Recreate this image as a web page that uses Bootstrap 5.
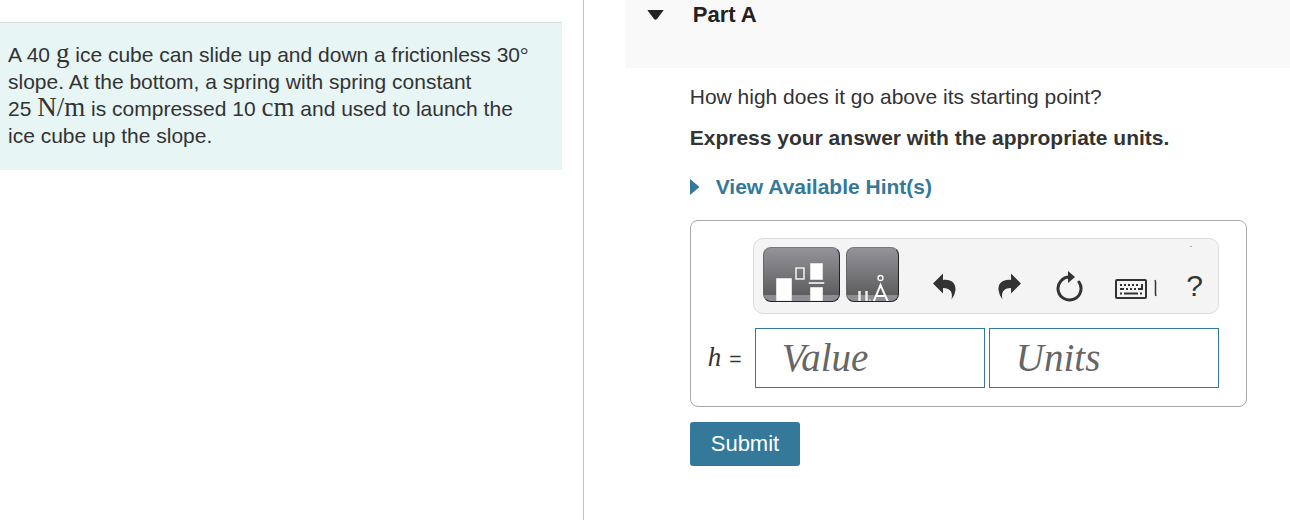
<!DOCTYPE html>
<html lang="en">
<head>
<meta charset="utf-8">
<meta name="viewport" content="width=device-width, initial-scale=1">
<title>Part A</title>
<link href="https://cdn.jsdelivr.net/npm/bootstrap@5.3.0/dist/css/bootstrap.min.css" rel="stylesheet">
<style>
  body { font-family: "Liberation Sans", Arial, sans-serif; font-size: 21px; line-height: 27px; color: #333; }
  .problem-pane { flex: 0 0 45.25%; border-right: 1px solid #bcc5cc; padding: 22px 21px 0 0; }
  .problem-text { background: #e7f5f5; border-top: 1px solid #d9dcdc; padding: 18px 24px 21px 8px; }
  .unit { font-family: "Liberation Serif", "Times New Roman", serif; font-size: 27px; line-height: 20px; }
  .degree { font-family: "Liberation Serif", "Times New Roman", serif; line-height: 20px; }
  .part-pane { min-width: 0; padding-left: 41px; }
  .part-head { background: #f9f9f9; height: 68px; padding: 1px 22px; }
  .part-toggle { font-size: 22px; line-height: 27px; color: #222; gap: 29px; }
  .part-body { padding: 15px 43px 24px 65px; }
  .instruction { margin: 14px 0 22px; }
  .hint-link { color: #34799a; gap: 16px; }
  .answer-box { border: 1px solid #aaa; border-radius: 8px; padding: 17px 27px 18px 17px; margin-top: 19px; }
  .answer-grid { display: grid; grid-template-columns: 45px 1fr; row-gap: 14px; align-items: center; }
  .tools { grid-column: 2; background: #f4f4f4; border: 1px solid #dcdcdc; border-radius: 10px; height: 76px; padding: 8px 9px; gap: 6px; }
  .tool-tile { height: 55px; border: 1px solid #222; border-top-color: #777; border-left-color: #666; border-radius: 8px; overflow: hidden;
    background: linear-gradient(#94939b, #5e5e5e 88%, #8e8d96 89%, #8e8d96); }
  .tile-wide { width: 77px; }
  .tile-narrow { width: 53px; }
  .tool-icons { padding: 0 6px 0 28px; }
  .tool-btn { color: #333; line-height: 30px; margin-top: 20px; }
  .tool-low { margin-top: 26px; margin-right: -4px; }
  .help-btn { position: relative; font-size: 30px; }
  .help-btn::after { content: ""; position: absolute; top: -25px; left: 4px; width: 2px; height: 1px; background: #aaa; }
  .variable { font-family: "Liberation Serif", "Times New Roman", serif; font-size: 27px; }
  .answer-fields { margin-left: 2px; }
  .answer-input { min-width: 0; height: 60px; border: 1px solid #34799a; border-radius: 0; padding: 0 26px; background: #fff;
    font: italic 39px/56px "Liberation Serif", "Times New Roman", serif; color: #333; }
  .answer-input::placeholder { color: #666; opacity: 1; }
  .submit-btn { background: #34799a; color: #fff; border: 0; border-radius: 3px; font-size: 22px; line-height: 28px; padding: 8px 21px; margin-top: 15px; }
</style>
<script src="https://cdn.jsdelivr.net/npm/bootstrap@5.3.0/dist/js/bootstrap.bundle.min.js"></script>
</head>
<body>
<div class="d-flex min-vh-100">
  <aside class="problem-pane">
    <p class="problem-text mb-0">A 40 <span class="unit">g</span> ice cube can slide up and down a frictionless 30<span class="degree">°</span> slope. At the bottom, a spring with spring constant <span class="text-nowrap">25 <span class="unit">N/m</span></span> is compressed 10 <span class="unit">cm</span> and used to launch the ice cube up the slope.</p>
  </aside>
  <main class="part-pane flex-grow-1">
    <header class="part-head">
      <button type="button" class="part-toggle btn border-0 p-0 fw-bold d-flex align-items-center">
        <svg width="17" height="10" viewBox="0 0 17 10" aria-hidden="true"><path d="M1 0h15q1 0 0 1L10 9q-1.500 1.500-3 0L1 1Q0 0 1 0Z" fill="currentColor"/></svg>
        Part A
      </button>
    </header>
    <div class="part-body">
      <p class="mb-0">How high does it go above its starting point?</p>
      <p class="instruction fw-bold">Express your answer with the appropriate units.</p>
      <a href="#" class="hint-link d-inline-flex align-items-center fw-bold text-decoration-none">
        <svg width="10" height="16" viewBox="0 0 10 16" aria-hidden="true"><path d="M0 0 9.500 8 0 16Z" fill="currentColor"/></svg>
        View Available Hint(s)
      </a>
      <form class="mb-0">
        <div class="answer-box">
          <div class="answer-grid">
            <div class="tools d-flex" role="toolbar" aria-label="Equation tools">
              <button type="button" class="tool-tile tile-wide p-0 flex-shrink-0" aria-label="Templates">
                <svg class="d-block" width="75" height="53" viewBox="0 0 75 53" fill="#fff" stroke="#ddd"><path d="M12.500 30.500h15V53h-15zM46.500 15.500h12v16h-12zM46.500 39.500h12V53h-12z"/><path d="M45 34.500h15v1H45z"/><path d="M32 20h8v11h-8z" fill="none" stroke="#eee" stroke-width="1.600"/></svg>
              </button>
              <button type="button" class="tool-tile tile-narrow p-0 flex-shrink-0" aria-label="Units">
                <svg class="d-block" width="51" height="53" viewBox="0 0 51 53" fill="none" stroke="#fff" stroke-width="2"><path d="M12.500 43v10M19.500 43v10M22.500 52.500h1" stroke="#eee" stroke-width="2.500"/><path d="M26.500 54 33.500 37 41 54M29 48h9.500"/><circle cx="33.500" cy="30" r="2.500" stroke-width="1.300"/></svg>
              </button>
              <div class="tool-icons d-flex flex-grow-1 justify-content-between align-items-center">
                <button type="button" class="tool-btn btn border-0 p-0 me-2" aria-label="Undo"><svg class="d-block" width="24" height="28" viewBox="0 0 24 28"><path d="M0 11.500 10 1.500V8C18 7 23 11 22.500 18Q22 23 18.500 27.500C20 21 18 16 10 16v5.500Z" fill="currentColor"/></svg></button>
                <button type="button" class="tool-btn btn border-0 p-0" aria-label="Redo"><svg class="d-block" width="24" height="28" viewBox="0 0 24 28"><path d="M23 11.500 13 1.500V8C5 7 0 11 .5 18Q1 23 4.500 27.500C3 21 5 16 13 16v5.500Z" fill="currentColor"/></svg></button>
                <button type="button" class="tool-btn btn border-0 p-0" aria-label="Reset"><svg class="d-block" width="28" height="32" viewBox="0 0 28 32"><path d="M15 7A11.500 11.500 0 1 0 24 12" fill="none" stroke="currentColor" stroke-width="3" stroke-linecap="round"/><path d="M13 1 20 7 13 13Z" fill="currentColor"/></svg></button>
                <button type="button" class="tool-btn tool-low btn border-0 p-0" aria-label="Keyboard shortcuts"><svg class="d-block" width="42" height="20" viewBox="0 0 42 20" fill="none" stroke="currentColor"><rect x="1" y="1" width="30" height="18" rx="1" stroke-width="2"/><path d="M5 6h20" stroke-width="2" stroke-dasharray="2 2"/><path d="M5 10h4m2 0h2m2 0h2m2 0h2m2 0h4V5M5 14.500h2m2 0h14m2 0h2" stroke-width="2"/><path d="M40 1q.5 1 .5 2v12q0 1 .5 2" stroke-width="1.500"/></svg></button>
                <button type="button" class="help-btn tool-btn btn border-0 p-0" aria-label="Help">?</button>
              </div>
            </div>
            <label class="d-flex align-items-baseline gap-2" for="value"><i class="variable">h</i>=</label>
            <div class="answer-fields d-flex gap-1">
              <input class="answer-input flex-fill w-50" id="value" type="text" placeholder="Value">
              <input class="answer-input flex-fill w-50" id="units" type="text" placeholder="Units" aria-label="Units">
            </div>
          </div>
        </div>
        <button type="submit" class="submit-btn">Submit</button>
      </form>
    </div>
  </main>
</div>
</body>
</html>
